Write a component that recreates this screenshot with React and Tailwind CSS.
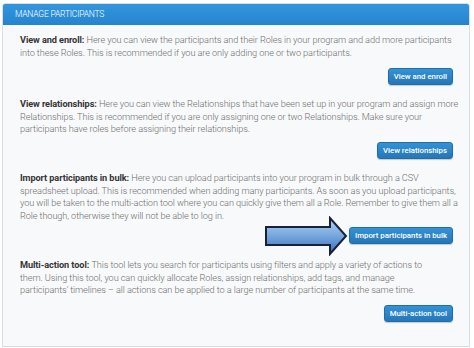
import React from "react";

function ActionButton({ children }) {
  return (
    <button className="h-[17px] px-[5px] rounded-[3px] bg-gradient-to-b from-[#3592d6] to-[#2577b7] border border-[#1f6ea9] text-white text-[7.8px] font-medium leading-none shadow-[0_1px_1px_rgba(0,0,0,0.2)] whitespace-nowrap">
      {children}
    </button>
  );
}

function Arrow() {
  return (
    <svg width="84" height="40" viewBox="0 0 84 40" className="-my-[12px] mr-[1px]">
      <defs>
        <linearGradient id="arrowFill" x1="0" y1="0" x2="0" y2="1">
          <stop offset="0" stopColor="#b4d2f2" />
          <stop offset="0.5" stopColor="#74a6de" />
          <stop offset="1" stopColor="#3b6db8" />
        </linearGradient>
      </defs>
      <path
        d="M2 11 L66 11 L66 2 L82 20 L66 38 L66 29 L2 29 Z"
        fill="url(#arrowFill)"
        stroke="#19203a"
        strokeWidth="2"
      />
    </svg>
  );
}

function Section({ title, lines, button, gapClass, arrow }) {
  return (
    <div>
      <div className={"text-[9.2px] font-light leading-[12.5px] text-[#6f6f6f] tracking-[-0.1px] " + gapClass}>
        {lines.map((line, i) => (
          <div key={i} className="whitespace-nowrap">
            {i === 0 && <span className="font-bold text-[#353535]">{title} </span>}
            {line}
          </div>
        ))}
      </div>
      <div className="flex justify-end items-center">
        {arrow && <Arrow />}
        <ActionButton>{button}</ActionButton>
      </div>
    </div>
  );
}

export default function App() {
  return (
    <div className="w-[474px] h-[348px] bg-white pt-[3px] px-[2px] font-['Roboto',sans-serif]">
      <div className="w-[468px] h-[344px] border border-[#d8dde2] rounded-t-[3px] bg-[#f8f9fa] overflow-hidden">
        <div className="h-[21px] bg-gradient-to-b from-[#3296de] to-[#2684cf] flex items-center pl-[12px] text-white text-[8.5px] font-light tracking-[-0.2px]">
          MANAGE PARTICIPANTS
        </div>
        <div className="pl-[17px] pr-[16px] pt-[9px] flex flex-col">
          <Section
            title="View and enroll:"
            lines={[
              "Here you can view the participants and their Roles in your program and add more participants",
              "into these Roles. This is recommended if you are only adding one or two participants.",
            ]}
            button="View and enroll"
            gapClass="mb-[9px]"
          />
          <div className="h-[13px]" />
          <Section
            title="View relationships:"
            lines={[
              "Here you can view the Relationships that have been set up in your program and assign more",
              "Relationships. This is recommended if you are only assigning one or two Relationships. Make sure your",
              "participants have roles before assigning their relationships.",
            ]}
            button="View relationships"
            gapClass="mb-[6.5px]"
          />
          <div className="h-[13px]" />
          <Section
            title="Import participants in bulk:"
            lines={[
              "Here you can upload participants into your program in bulk through a CSV",
              "spreadsheet upload. This is recommended when adding many participants. As soon as you upload participants,",
              "you will be taken to the multi-action tool where you can quickly give them all a Role. Remember to give them all a",
              "Role though, otherwise they will not be able to log in.",
            ]}
            button="Import participants in bulk"
            gapClass="mb-[5px]"
            arrow
          />
          <div className="h-[15px]" />
          <Section
            title="Multi-action tool:"
            lines={[
              "This tool lets you search for participants using filters and apply a variety of actions to",
              "them. Using this tool, you can quickly allocate Roles, assign relationships, add tags, and manage",
              "participants' timelines – all actions can be applied to a large number of participants at the same time.",
            ]}
            button="Multi-action tool"
            gapClass="mb-[8.5px]"
          />
        </div>
      </div>
    </div>
  );
}
